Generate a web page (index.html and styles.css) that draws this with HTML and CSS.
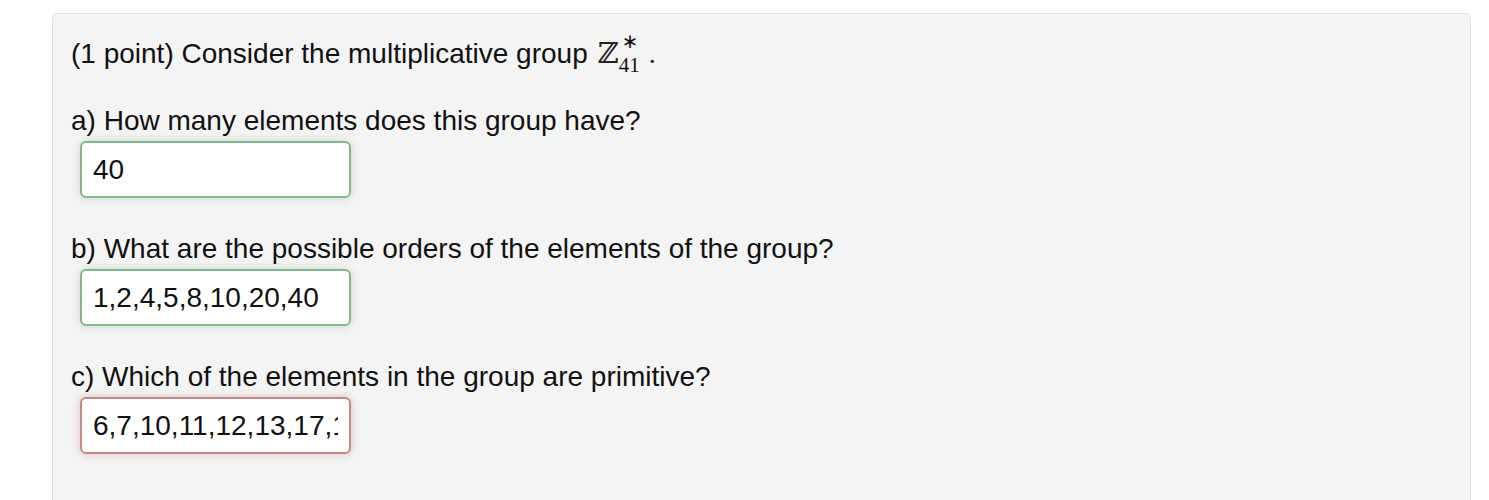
FILE: index.html
```html
<!DOCTYPE html>
<html>
<head>
<meta charset="utf-8">
<link rel="stylesheet" href="styles.css">
</head>
<body>
<div class="well">
  <p class="intro">(1 point) Consider the multiplicative group <span class="bb">ℤ</span><span class="scripts"><span class="sup">∗</span><span class="sub">41</span></span><span class="dot">.</span></p>
  <div class="q">
    <p class="qtext">a) How many elements does this group have?</p>
    <input class="ans correct" type="text" value="40">
  </div>
  <div class="q">
    <p class="qtext">b) What are the possible orders of the elements of the group?</p>
    <input class="ans correct" type="text" value="1,2,4,5,8,10,20,40">
  </div>
  <div class="q">
    <p class="qtext">c) Which of the elements in the group are primitive?</p>
    <input class="ans wrong" type="text" value="6,7,10,11,12,13,17,19,24,28,29,30,34,35">
  </div>
</div>
</body>
</html>
```
FILE: styles.css
```css
html, body {
  margin: 0;
  padding: 0;
  background: #ffffff;
}
body {
  font-family: "Liberation Sans", Arial, sans-serif;
  color: #111;
}
.well {
  margin: 13px 18px 0 52px;
  height: 520px;
  background: #f4f4f4;
  border: 1px solid #e2e2e2;
  border-radius: 5px;
  padding: 23px 18px 0 18px;
  box-sizing: border-box;
}
p {
  margin: 0;
  font-size: 28px;
  line-height: 32px;
}
.intro {
  height: 32px;
  margin-bottom: 36px;
}
.bb {
  font-family: "DejaVu Serif", serif;
  font-size: 29px;
  color: #222;
  margin-left: 2px;
}
.scripts {
  display: inline-flex;
  flex-direction: column;
  vertical-align: 15px;
  margin: -16px 0 -14px 0;
  font-family: "Liberation Serif", "DejaVu Serif", serif;
}
.sup {
  font-family: "DejaVu Sans", sans-serif;
  font-size: 20px;
  line-height: 22px;
  padding-left: 3px;
}
.sub {
  font-size: 21px;
  line-height: 22px;
  margin-top: 2px;
}
.dot {
  margin-left: 9px;
  font-family: "Liberation Serif", serif;
}
.q {
  margin-bottom: 35px;
}
.qtext {
  margin-bottom: 4px;
}
.ans {
  display: block;
  width: 271px;
  height: 57px;
  box-sizing: border-box;
  margin-left: 9px;
  padding: 0 11px;
  border-radius: 6px;
  background: #fff;
  font-family: "Liberation Sans", Arial, sans-serif;
  font-size: 28px;
  color: #111;
  outline: none;
}
.correct {
  border: 2px solid #88b588;
  box-shadow: 0 0 8px rgba(110, 170, 110, 0.35);
}
.wrong {
  border: 2px solid #c48a8a;
  box-shadow: 0 0 8px rgba(190, 110, 110, 0.4);
}
```
